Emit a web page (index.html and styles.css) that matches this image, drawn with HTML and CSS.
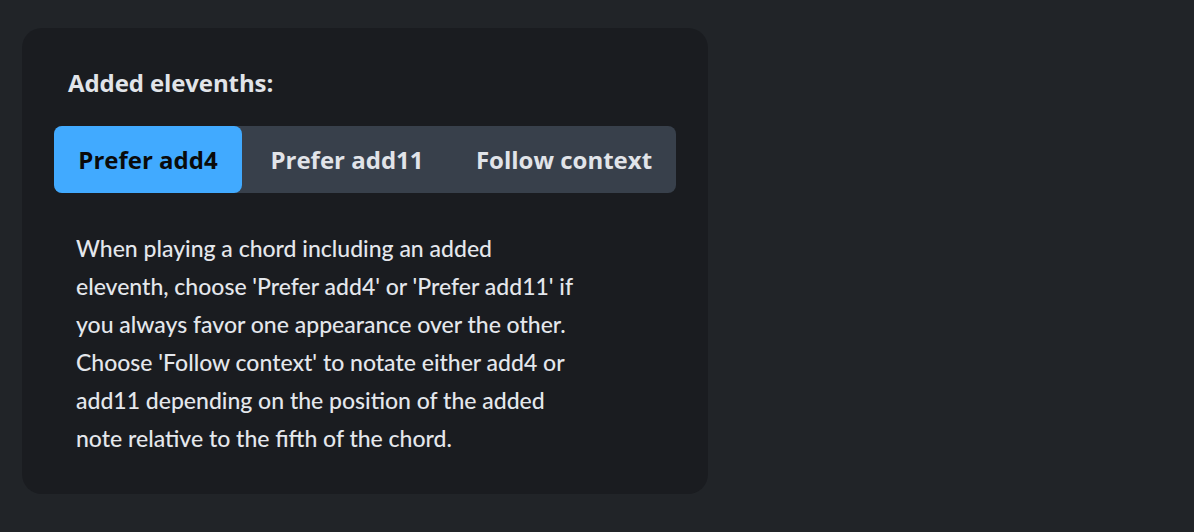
FILE: index.html
```html
<!DOCTYPE html>
<html>
<head>
<meta charset="utf-8">
<link rel="stylesheet" href="styles.css">
</head>
<body>
<div class="card">
  <div class="label">Added elevenths:</div>
  <div class="segmented">
    <div class="seg seg-active">Prefer add4</div>
    <div class="seg">Prefer add11</div>
    <div class="seg">Follow context</div>
  </div>
  <p class="desc">When playing a chord including an added eleventh, choose 'Prefer add4' or 'Prefer add11' if you always favor one appearance over the other. Choose 'Follow context' to notate either add4 or add11 depending on the position of the added note relative to the fifth of the chord.</p>
</div>
</body>
</html>
```
FILE: styles.css
```css
html, body {
  margin: 0;
  padding: 0;
  background: #212428;
  height: 100%;
}
body {
  padding: 28px 0 0 22px;
  box-sizing: border-box;
  font-family: "Open Sans", "Noto Sans", sans-serif;
  color: #e1e4e9;
}
.card {
  width: 686px;
  height: 466px;
  box-sizing: border-box;
  background: #1a1c20;
  border-radius: 20px;
  padding: 40px 32px 0 32px;
}
.label {
  margin-left: 14px;
  font-size: 24px;
  font-weight: 700;
  line-height: 30px;
  letter-spacing: -0.1px;
  color: #e1e4e9;
}
.segmented {
  margin-top: 28px;
  height: 67px;
  display: grid;
  grid-template-columns: 188px 210px 224px;
  background: #38404b;
  border-radius: 8px;
}
.seg {
  display: flex;
  align-items: center;
  justify-content: center;
  font-size: 24px;
  font-weight: 700;
  color: #e1e4e9;
  border-radius: 8px;
}
.seg-active {
  background: #41aaff;
  color: #0a0a0a;
}
.desc {
  margin: 36px 0 0 22px;
  width: 510px;
  font-family: Lato, "Open Sans", sans-serif;
  font-size: 23px;
  font-weight: 500;
  line-height: 38px;
  color: #e4e7ec;
}
```
